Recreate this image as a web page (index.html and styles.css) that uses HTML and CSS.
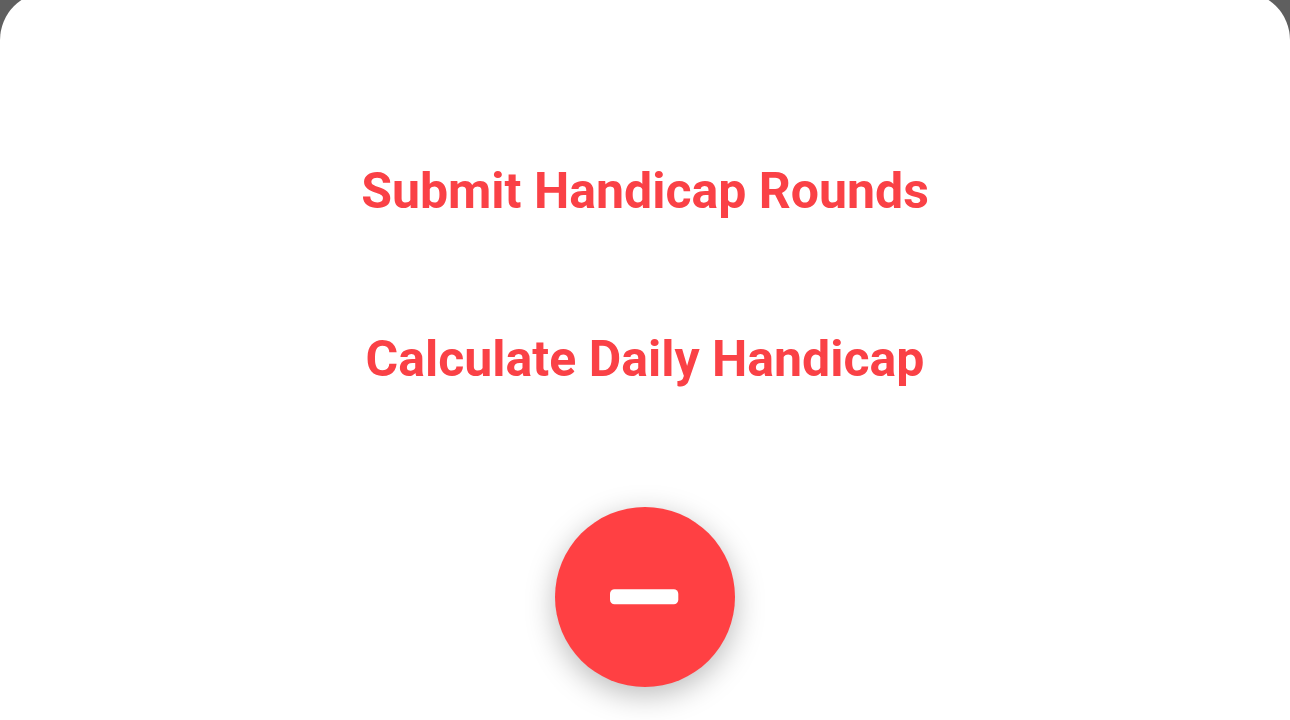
FILE: index.html
```html
<!DOCTYPE html>
<html lang="en">
<head>
<meta charset="utf-8">
<meta name="viewport" content="width=device-width, initial-scale=1">
<title>Handicap</title>
<link rel="stylesheet" href="styles.css">
</head>
<body>
<main class="sheet">
  <nav class="actions">
    <a class="action" href="#submit">Submit Handicap Rounds</a>
    <a class="action" href="#calculate">Calculate Daily Handicap</a>
  </nav>
  <button class="toggle" type="button" aria-label="Close menu">
    <svg class="toggle-icon" viewBox="0 0 70 16" aria-hidden="true"><rect y="0.3" width="68.3" height="15" rx="4.5" fill="currentColor"/></svg>
  </button>
</main>
</body>
</html>
```
FILE: styles.css
```css
* { box-sizing: border-box; }
body {
  display: flow-root;
  margin: 0;
  background: #5f5f5f;
  font-family: Roboto, "Noto Sans", sans-serif;
}
.sheet {
  display: flex;
  flex-direction: column;
  align-items: center;
  min-height: calc(100vh + 8px);
  margin-top: -8px;
  padding: 165px 24px 33px;
  border-radius: 48px 48px 0 0;
  background: #fff;
}
.actions {
  display: flex;
  flex-direction: column;
  align-items: center;
  gap: 100px;
}
.action {
  color: #fa4146;
  font-size: 50px;
  font-weight: 700;
  line-height: 68px;
  text-align: center;
  text-decoration: none;
}
.toggle {
  display: grid;
  place-items: center;
  width: 180px;
  height: 180px;
  margin-top: 114px;
  padding: 0;
  border: 0;
  border-radius: 50%;
  background: #ff4043;
  color: #fff;
  box-shadow: 0 8px 30px rgba(0, 0, 0, 0.27);
}
.toggle-icon {
  width: 70px;
  height: 16px;
}
```
